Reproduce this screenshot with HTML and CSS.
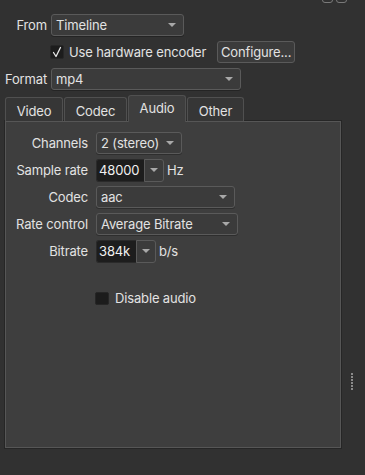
FILE: index.html
```html
<!DOCTYPE html>
<html>
<head>
<meta charset="utf-8">
<link rel="stylesheet" href="styles.css">
</head>
<body>
<div class="topbar"><span class="tb-icon"></span><span class="tb-icon"></span></div>
<div class="form">
  <div class="row">
    <span class="lbl">From</span>
    <div class="combo w-from"><span class="val">Timeline</span><i class="arrow"></i></div>
  </div>
  <div class="row">
    <span class="lbl"></span>
    <span class="check on"><svg width="12" height="12" viewBox="0 0 12 12"><path d="M2.5 6.5 L5 10.5 L9.5 1.5" fill="none" stroke="#e8e8e8" stroke-width="1.3" stroke-linecap="round" stroke-linejoin="round"/></svg></span>
    <span class="check-text">Use hardware encoder</span>
    <span class="btn">Configure...</span>
  </div>
  <div class="row">
    <span class="lbl">Format</span>
    <div class="combo w-format"><span class="val">mp4</span><i class="arrow"></i></div>
  </div>
  <div class="tabs">
    <span class="tab t-video">Video</span>
    <span class="tab t-codec">Codec</span>
    <span class="tab active t-audio">Audio</span>
    <span class="tab t-other">Other</span>
  </div>
</div>
<div class="main">
  <div class="panel">
    <div class="prow">
      <span class="plbl">Channels</span>
      <div class="combo w-ch"><span class="val">2 (stereo)</span><i class="arrow"></i></div>
    </div>
    <div class="prow">
      <span class="plbl">Sample rate</span>
      <div class="spin w-sr"><span class="spin-val">48000</span><span class="spin-btn"><i class="arrow"></i></span></div>
      <span class="unit">Hz</span>
    </div>
    <div class="prow">
      <span class="plbl">Codec</span>
      <div class="combo w-codec"><span class="val">aac</span><i class="arrow"></i></div>
    </div>
    <div class="prow">
      <span class="plbl">Rate control</span>
      <div class="combo w-rate"><span class="val">Average Bitrate</span><i class="arrow"></i></div>
    </div>
    <div class="prow">
      <span class="plbl">Bitrate</span>
      <div class="spin w-br"><span class="spin-val">384k</span><span class="spin-btn"><i class="arrow"></i></span></div>
      <span class="unit">b/s</span>
    </div>
    <div class="prow prow-dis">
      <span class="plbl"></span>
      <span class="check"></span>
      <span class="check-text">Disable audio</span>
    </div>
  </div>
  <div class="grip"><i></i><i></i><i></i><i></i><i></i><i></i></div>
</div>
</body>
</html>
```
FILE: styles.css
```css
* { box-sizing: border-box; }
html, body { margin: 0; padding: 0; }
body {
  width: 365px;
  height: 475px;
  overflow: hidden;
  background: #313131;
  color: #e2e2e2;
  font-family: Inter, "Noto Sans", "Liberation Sans", sans-serif;
  font-size: 13px;
  line-height: 16px;
  letter-spacing: -0.15px;
}
.topbar {
  height: 14px;
  display: flex;
  justify-content: flex-end;
  gap: 3px;
  padding-right: 18px;
}
.tb-icon {
  width: 11px;
  height: 9px;
  margin-top: -6px;
  border: 1px solid #7a7a7a;
  border-radius: 3px;
}
.form {
  display: flex;
  flex-direction: column;
  gap: 5px;
  padding-left: 4px;
}
.row {
  display: flex;
  align-items: center;
  height: 22px;
  gap: 4px;
}
.lbl {
  width: 43px;
  text-align: right;
  flex: none;
  white-space: nowrap;
}
.combo {
  height: 22px;
  display: flex;
  align-items: center;
  justify-content: space-between;
  padding: 0 7px 0 4px;
  background: #3b3b3b;
  border: 1px solid #5a5a5a;
  border-radius: 3px;
  box-shadow: 0 1px 0 rgba(0,0,0,0.25);
}
.arrow {
  display: block;
  width: 0;
  height: 0;
  border-left: 4px solid transparent;
  border-right: 4px solid transparent;
  border-top: 4px solid #a8a8a8;
}
.w-from { width: 133px; }
.w-format { width: 190px; }
.check {
  width: 14px;
  height: 14px;
  background: #1c1c1c;
  border: 1px solid #262626;
  border-radius: 2px;
  display: flex;
  align-items: center;
  justify-content: center;
  flex: none;
}
.check svg { display: block; }
.row .check { margin-left: -1px; }
.check-text { margin-left: 1px; white-space: nowrap; }
.btn {
  margin-left: 7px;
  height: 22px;
  width: 78px;
  display: flex;
  align-items: center;
  justify-content: center;
  background: #3b3b3b;
  border: 1px solid #5a5a5a;
  border-radius: 3px;
  white-space: nowrap;
}
.tabs {
  display: flex;
  align-items: flex-end;
  gap: 1px;
  height: 26px;
  margin-left: 1px;
  position: relative;
  z-index: 1;
}
.tab {
  height: 24px;
  display: flex;
  align-items: center;
  justify-content: center;
  background: #363636;
  border: 1px solid #505050;
  border-bottom: none;
  border-radius: 3px 3px 0 0;
  padding-top: 2px;
}
.tab.active {
  height: 27px;
  margin-bottom: -1px;
  background: #3e3e3e;
  padding-top: 0;
  padding-bottom: 3px;
}
.t-video { width: 58px; }
.t-codec { width: 63px; }
.t-audio { width: 58px; }
.t-other { width: 57px; }
.main {
  display: flex;
  align-items: flex-start;
}
.panel {
  margin-left: 5px;
  width: 336px;
  height: 327px;
  background: #3e3e3e;
  border: 1px solid #565656;
  box-shadow: 0 0 0 1px #262626;
  display: flex;
  flex-direction: column;
  gap: 5px;
  padding-top: 10px;
}
.prow {
  display: flex;
  align-items: center;
  height: 22px;
}
.plbl {
  width: 82px;
  margin-right: 8px;
  text-align: right;
  white-space: nowrap;
  flex: none;
}
.w-ch { width: 86px; }
.w-codec { width: 139px; }
.w-rate { width: 142px; }
.spin {
  height: 23px;
  display: flex;
  border-radius: 3px;
}
.spin-val {
  display: flex;
  align-items: center;
  padding-left: 2px;
  background: #1d1d1d;
  border: 1px solid #2a2a2a;
  border-right: none;
  border-radius: 3px 0 0 3px;
  color: #f0f0f0;
}
.spin-btn {
  width: 20px;
  display: flex;
  align-items: center;
  justify-content: center;
  background: #3b3b3b;
  border: 1px solid #5a5a5a;
  border-radius: 0 3px 3px 0;
}
.w-sr .spin-val { width: 48px; }
.w-br .spin-val { width: 40px; }
.unit { margin-left: 3px; }
.prow-dis { margin-top: 20px; }
.prow-dis .check { margin-left: -1px; width: 14px; height: 13px; }
.prow-dis .check-text { margin-left: 6px; }
.grip {
  margin-left: 10px;
  margin-top: 252px;
  display: flex;
  flex-direction: column;
  gap: 1px;
}
.grip i {
  display: block;
  width: 2px;
  height: 2px;
  background: #8a8a8a;
}
```
